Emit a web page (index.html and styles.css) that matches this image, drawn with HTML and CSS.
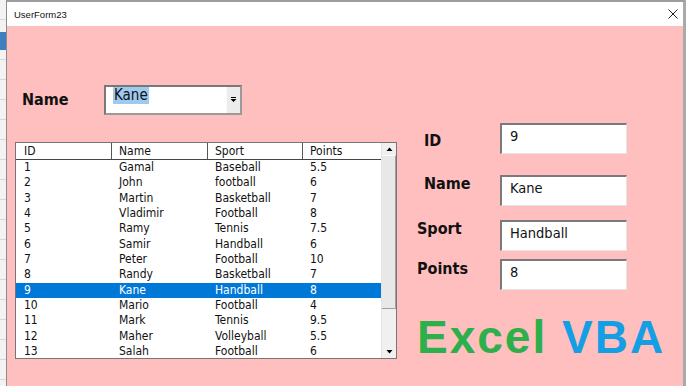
FILE: index.html
```html
<!DOCTYPE html>
<html lang="en">
<head>
    <meta charset="UTF-8">
    <meta name="viewport" content="width=device-width, initial-scale=1.0">
    <title>UserForm23</title>
    <link rel="stylesheet" href="styles.css">
</head>
<body>
    <div class="screen">
        <div class="sheet-edge"><div class="cell-sel"></div></div>

        <div class="form">
            <div class="titlebar">
                <span class="title">UserForm23</span>
                <svg class="close" width="10" height="10" viewBox="0 0 10 10">
                    <path d="M0.5 0.5 L9.5 9.5 M9.5 0.5 L0.5 9.5" stroke="#222" stroke-width="1" fill="none"/>
                </svg>
            </div>

            <div class="client">
                <div class="left-pane">
                    <div class="name-row">
                        <span class="lbl lbl-name">Name</span>
                        <div class="combo">
                            <span class="combo-text">Kane</span>
                            <div class="combo-btn">
                                <svg width="7" height="6" viewBox="0 0 7 6">
                                    <rect x="1" y="0" width="5" height="1" fill="#000"/>
                                    <path d="M0.5 2 L6.5 2 L3.5 5 Z" fill="#000"/>
                                </svg>
                            </div>
                        </div>
                    </div>

                    <div class="listbox">
                        <div class="list-body">
                            <div class="list-head">
                                <span>ID</span><span>Name</span><span>Sport</span><span>Points</span>
                            </div>
                            <div class="row"><span>1</span><span>Gamal</span><span>Baseball</span><span>5.5</span></div>
                            <div class="row"><span>2</span><span>John</span><span>football</span><span>6</span></div>
                            <div class="row"><span>3</span><span>Martin</span><span>Basketball</span><span>7</span></div>
                            <div class="row"><span>4</span><span>Vladimir</span><span>Football</span><span>8</span></div>
                            <div class="row"><span>5</span><span>Ramy</span><span>Tennis</span><span>7.5</span></div>
                            <div class="row"><span>6</span><span>Samir</span><span>Handball</span><span>6</span></div>
                            <div class="row"><span>7</span><span>Peter</span><span>Football</span><span>10</span></div>
                            <div class="row"><span>8</span><span>Randy</span><span>Basketball</span><span>7</span></div>
                            <div class="row selected"><span>9</span><span>Kane</span><span>Handball</span><span>8</span></div>
                            <div class="row"><span>10</span><span>Mario</span><span>Football</span><span>4</span></div>
                            <div class="row"><span>11</span><span>Mark</span><span>Tennis</span><span>9.5</span></div>
                            <div class="row"><span>12</span><span>Maher</span><span>Volleyball</span><span>5.5</span></div>
                            <div class="row"><span>13</span><span>Salah</span><span>Football</span><span>6</span></div>
                        </div>
                        <div class="scrollbar">
                            <div class="sb-btn">
                                <svg width="7" height="4" viewBox="0 0 7 4"><path d="M0.5 4 L3.5 0.5 L6.5 4 Z" fill="#000"/></svg>
                            </div>
                            <div class="sb-thumb"></div>
                            <div class="sb-track"></div>
                            <div class="sb-btn">
                                <svg width="7" height="4" viewBox="0 0 7 4"><path d="M0.5 0 L6.5 0 L3.5 3.5 Z" fill="#000"/></svg>
                            </div>
                        </div>
                    </div>
                </div>

                <div class="right-pane">
                    <div class="field field-id">
                        <span class="lbl">ID</span>
                        <div class="textbox">9</div>
                    </div>
                    <div class="field field-name">
                        <span class="lbl">Name</span>
                        <div class="textbox">Kane</div>
                    </div>
                    <div class="field field-sport">
                        <span class="lbl">Sport</span>
                        <div class="textbox">Handball</div>
                    </div>
                    <div class="field field-points">
                        <span class="lbl">Points</span>
                        <div class="textbox">8</div>
                    </div>

                    <div class="logo"><span class="excel">Excel</span> <span class="vba">VBA</span></div>
                </div>
            </div>
        </div>
    </div>
</body>
</html>
```

FILE: styles.css
```css
body {
    margin: 0;
    background: #e9e9e9;
    font-family: "DejaVu Sans Condensed", "DejaVu Sans", sans-serif;
    font-stretch: condensed;
    color: #111;
    overflow: hidden;
}
.screen {
    display: flex;
    height: 386px;
}

/* excel sheet peeking out on the left */
.sheet-edge {
    width: 6px;
    padding-top: 32px;
    background: repeating-linear-gradient(#f3f3f3 0 19px, #d6d6d6 19px 20px);
}
.cell-sel {
    height: 18px;
    background: #3f7fbf;
}

.form {
    width: 676px;
    border-left: 1px solid #8c8c8c;
    border-right: 3px solid #a9a9a9;
    border-top: 2px solid #9d9d9d;
    display: flex;
    flex-direction: column;
}
.titlebar {
    height: 24px;
    background: #fff;
    display: flex;
    align-items: center;
    justify-content: space-between;
    padding: 0 5px 0 7px;
}
.title {
    font-family: "Liberation Sans", Arial, sans-serif;
    font-size: 9.5px;
    color: #111;
}

.client {
    flex: 1;
    background: #ffbfbf;
    display: flex;
}

/* left side */
.left-pane {
    width: 382px;
    padding-left: 8px;
}
.name-row {
    display: flex;
    align-items: center;
    height: 30px;
    margin-top: 59px;
}
.lbl {
    font-weight: bold;
    font-size: 16px;
    line-height: 18px;
    color: #111;
}
.lbl-name {
    width: 82px;
    margin-left: 7px;
}
.combo {
    width: 138px;
    height: 30px;
    box-sizing: border-box;
    background: #fff;
    border-top: 2px solid #787878;
    border-left: 2px solid #787878;
    border-right: 2px solid #9a9a9a;
    border-bottom: 2px solid #9a9a9a;
    display: flex;
    justify-content: space-between;
}
.combo-text {
    align-self: flex-start;
    margin-left: 7px;
    padding: 0 1px;
    font-size: 15px;
    line-height: 17px;
    background: #9fcaf0;
}
.combo-btn {
    width: 13px;
    background: #ececec;
    border-left: 1px solid #fafafa;
    display: flex;
    align-items: center;
    justify-content: center;
}

.listbox {
    margin-top: 27px;
    width: 382px;
    height: 217px;
    box-sizing: border-box;
    border: 1px solid #767676;
    background: #fff;
    display: flex;
    overflow: hidden;
}
.list-body {
    flex: 1;
    font-size: 12px;
}
.list-head,
.row {
    display: grid;
    grid-template-columns: 95px 96px 95px 1fr;
}
.list-head {
    height: 16px;
    line-height: 16px;
    border-bottom: 1px solid #444;
}
.list-head span {
    padding-left: 7px;
    border-left: 1px solid #555;
}
.list-head span:first-child {
    padding-left: 8px;
    border-left: none;
}
.row {
    height: 15.33px;
    line-height: 15.33px;
}
.row span { padding-left: 8px; }
.row.selected {
    background: #0078d7;
    color: #fff;
}

.scrollbar {
    width: 14px;
    background: #f0f0f0;
    border-left: 1px solid #e2e2e2;
    display: flex;
    flex-direction: column;
}
.sb-btn {
    height: 12px;
    display: flex;
    align-items: center;
    justify-content: center;
    background: #f0f0f0;
}
.sb-thumb {
    height: 152px;
    background: #e8e8e8;
    border-right: 1px solid #a0a0a0;
    border-bottom: 1px solid #a0a0a0;
    border-top: 1px solid #fafafa;
}
.sb-track { flex: 1; }

/* right side */
.right-pane {
    padding-left: 20px;
}
.field {
    display: grid;
    grid-template-columns: 83px 127px;
}
.field-id { margin-top: 97px; }
.field-name { margin-top: 21px; }
.field-sport { margin-top: 14px; }
.field-points { margin-top: 8px; }
.field-id .lbl { padding: 9px 0 0 7px; }
.field-name .lbl { padding-left: 7px; }
.field-points .lbl { padding-top: 1px; }

.textbox {
    height: 31px;
    box-sizing: border-box;
    background: #fff;
    border-top: 2px solid #7a7a7a;
    border-left: 2px solid #7a7a7a;
    border-right: 1px solid #e4e4e4;
    border-bottom: 1px solid #e4e4e4;
    padding: 3px 0 0 8px;
    font-size: 14.5px;
    line-height: 17px;
}

.logo {
    margin-top: 24px;
    font-family: "Liberation Sans", Arial, sans-serif;
    font-weight: bold;
    font-size: 46px;
    line-height: 46px;
    letter-spacing: 2px;
    white-space: nowrap;
}
.excel { color: #2db04b; }
.vba { color: #149fe4; }
```
